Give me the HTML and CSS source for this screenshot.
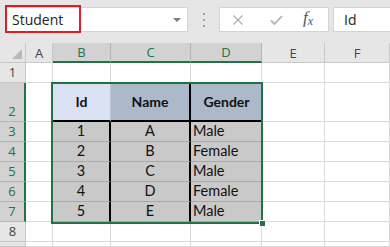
FILE: index.html
```html
<!DOCTYPE html>
<html>
<head>
<meta charset="utf-8">
<link rel="stylesheet" href="styles.css">
</head>
<body>
<div class="toolbar">
  <div class="namebox">
    <span class="hl"></span>
    <span class="nametext">Student</span>
    <span class="arrow"></span>
  </div>
  <div class="grip"><i></i><i></i><i></i></div>
  <div class="fbtns">
    <svg class="ico" width="12" height="12" viewBox="0 0 12 12"><path d="M1.5 1.5 L10.5 10.5 M10.5 1.5 L1.5 10.5" stroke="#b3b3b3" stroke-width="1.4" fill="none"/></svg>
    <svg class="ico" width="13" height="12" viewBox="0 0 13 12"><path d="M1 6.5 L4.5 10 L12 2" stroke="#b3b3b3" stroke-width="1.8" fill="none"/></svg>
    <span class="fx">f<sub>x</sub></span>
  </div>
  <div class="finput">Id</div>
</div>
<div class="sheet">
  <div class="c corner"><span class="tri"></span></div>
  <div class="c ch">A</div>
  <div class="c ch sel">B</div>
  <div class="c ch sel">C</div>
  <div class="c ch sel">D</div>
  <div class="c ch">E</div>
  <div class="c ch">F</div>

  <div class="c rh">1</div>
  <div class="c"></div><div class="c"></div><div class="c"></div><div class="c"></div><div class="c"></div><div class="c"></div>

  <div class="c rh sel">2</div>
  <div class="c"></div>
  <div class="c th th-id">Id</div>
  <div class="c th th-mid">Name</div>
  <div class="c th">Gender</div>
  <div class="c"></div><div class="c"></div>

  <div class="c rh sel">3</div>
  <div class="c"></div>
  <div class="c td sep ctr">1</div>
  <div class="c td sep ctr">A</div>
  <div class="c td">Male</div>
  <div class="c"></div><div class="c"></div>

  <div class="c rh sel">4</div>
  <div class="c"></div>
  <div class="c td sep ctr">2</div>
  <div class="c td sep ctr">B</div>
  <div class="c td">Female</div>
  <div class="c"></div><div class="c"></div>

  <div class="c rh sel">5</div>
  <div class="c"></div>
  <div class="c td sep ctr">3</div>
  <div class="c td sep ctr">C</div>
  <div class="c td">Male</div>
  <div class="c"></div><div class="c"></div>

  <div class="c rh sel">6</div>
  <div class="c"></div>
  <div class="c td sep ctr">4</div>
  <div class="c td sep ctr">D</div>
  <div class="c td">Female</div>
  <div class="c"></div><div class="c"></div>

  <div class="c rh sel">7</div>
  <div class="c"></div>
  <div class="c td sep ctr">5</div>
  <div class="c td sep ctr">E</div>
  <div class="c td">Male</div>
  <div class="c"></div><div class="c"></div>

  <div class="c rh">8</div>
  <div class="c"></div><div class="c"></div><div class="c"></div><div class="c"></div><div class="c"></div><div class="c"></div>

  <div class="c rh"></div>
  <div class="c"></div><div class="c"></div><div class="c"></div><div class="c"></div><div class="c"></div><div class="c"></div>

  <div class="selection"><span class="handle"></span></div>
</div>
</body>
</html>
```
FILE: styles.css
```css
html, body {
  margin: 0;
  padding: 0;
}
body {
  width: 390px;
  height: 247px;
  overflow: hidden;
  background: #ffffff;
  font-family: "Open Sans", "Noto Sans", sans-serif;
  color: #222;
}
.toolbar {
  height: 43px;
  box-sizing: border-box;
  background: #e6e6e6;
  display: flex;
  align-items: flex-start;
  padding-top: 7px;
}
.namebox {
  position: relative;
  margin-left: 5px;
  width: 183px;
  height: 25px;
  box-sizing: border-box;
  background: #fff;
  border: 1px solid #d4d4d4;
  display: flex;
  align-items: center;
  padding-left: 6px;
  padding-right: 6px;
}
.hl {
  position: absolute;
  left: -1px;
  top: -3px;
  width: 76px;
  height: 28px;
  box-sizing: border-box;
  border: 2px solid #e01b24;
}
.nametext {
  font-family: "Open Sans", sans-serif;
  font-size: 14px;
  color: #222;
  line-height: 23px;
}
.arrow {
  margin-left: auto;
  width: 0;
  height: 0;
  border-left: 4px solid transparent;
  border-right: 4px solid transparent;
  border-top: 4px solid #7b7b7b;
}
.grip {
  width: 31px;
  height: 25px;
  display: flex;
  flex-direction: column;
  align-items: center;
  justify-content: center;
  gap: 4px;
}
.grip i {
  display: block;
  width: 2px;
  height: 2px;
  background: #a3a3a3;
}
.fbtns {
  width: 110px;
  height: 25px;
  box-sizing: border-box;
  background: #fff;
  border: 1px solid #d4d4d4;
  display: flex;
  align-items: center;
  padding-left: 12px;
}
.fbtns .ico {
  display: block;
}
.fbtns .ico + .ico {
  margin-left: 26px;
}
.fx {
  margin-left: 20px;
  font-family: "Liberation Serif", serif;
  font-style: italic;
  font-size: 17px;
  color: #555;
  line-height: 16px;
}
.fx sub {
  font-size: 12px;
  vertical-align: -2px;
}
.finput {
  margin-left: 4px;
  flex: 1;
  height: 25px;
  box-sizing: border-box;
  background: #fff;
  border: 1px solid #d4d4d4;
  border-right: none;
  padding-left: 10px;
  font-size: 14px;
  line-height: 23px;
  color: #222;
}
.sheet {
  position: relative;
  display: grid;
  grid-template-columns: 26px 27px 58px 80px 71px 63px 65px;
  grid-template-rows: 20px 20px 39px repeat(6, 20px) 5px;
}
.c {
  box-sizing: border-box;
  border-right: 1px solid #dadada;
  border-bottom: 1px solid #dadada;
  font-family: "Lato", "Open Sans", sans-serif;
  font-size: 14.5px;
  color: #111;
  display: flex;
  align-items: flex-end;
  line-height: 18px;
  padding-bottom: 1px;
  overflow: hidden;
}
.corner {
  background: #e6e6e6;
  border-right: 1px solid #c8c8c8;
  border-bottom: 1px solid #c8c8c8;
  position: relative;
}
.tri {
  position: absolute;
  right: 3px;
  bottom: 3px;
  width: 0;
  height: 0;
  border-left: 10px solid transparent;
  border-bottom: 10px solid #b9b9b9;
}
.ch {
  background: #e6e6e6;
  border-right: 1px solid #c8c8c8;
  border-bottom: 1px solid #c8c8c8;
  justify-content: center;
  align-items: center;
  font-family: "Open Sans", sans-serif;
  font-size: 13px;
  color: #444;
  padding-bottom: 0;
}
.ch.sel {
  background: #d2d2d2;
  color: #217346;
  border-bottom: 2px solid #217346;
  border-right-color: #b5b5b5;
}
.rh {
  background: #e6e6e6;
  border-right: 1px solid #c8c8c8;
  border-bottom: 1px solid #c8c8c8;
  justify-content: center;
  font-family: "Open Sans", sans-serif;
  font-size: 13px;
  color: #444;
}
.rh.sel {
  background: #d2d2d2;
  color: #217346;
  border-right: 2px solid #217346;
  border-bottom-color: #b5b5b5;
}
.th {
  background: #acb9ca;
  border-bottom: 2px solid #000;
  border-right: none;
  justify-content: center;
  align-items: center;
  font-weight: bold;
  font-size: 14px;
  padding-bottom: 0;
}
.th-id {
  background: #d9e1f2;
  border-right: 1px solid #b9c3d1;
}
.th-mid {
  border-right: 2px solid #000;
}
.td {
  background: #c9c9c9;
  border-right: none;
  border-bottom: 1px solid #a9a9a9;
  padding-left: 2px;
}
.td.sep {
  border-right: 2px solid #000;
}
.td.ctr {
  justify-content: center;
  padding-left: 0;
}
.selection {
  position: absolute;
  left: 51px;
  top: 39px;
  width: 212px;
  height: 142px;
  box-sizing: border-box;
  border: 2px solid #217346;
}
.handle {
  position: absolute;
  right: -5px;
  bottom: -5px;
  width: 5px;
  height: 5px;
  background: #217346;
  border: 1px solid #fff;
}
```
